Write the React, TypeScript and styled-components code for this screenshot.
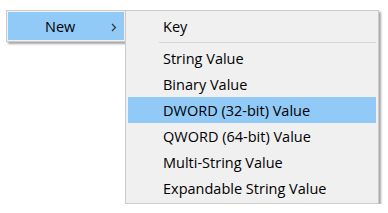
import React, { FC } from "react";
import styled, { createGlobalStyle } from "styled-components";

const GlobalStyle = createGlobalStyle`
  html, body {
    margin: 0;
    padding: 0;
    background: #fff;
  }
  body {
    font-family: "Open Sans", "Noto Sans", sans-serif;
    font-size: 14.5px;
    color: #000;
  }
`;

const Page = styled.div`
  display: flex;
  align-items: flex-start;
  padding: 10px 0 0 6px;
`;

const Menu = styled.div<{ $width: number }>`
  width: ${(p) => p.$width}px;
  box-sizing: border-box;
  background: #f0f0f0;
  border: 1px solid #cccccc;
  padding: 1px;
  box-shadow: 2px 2px 2px rgba(0, 0, 0, 0.35);
`;

const SubMenu = styled(Menu)`
  margin-left: -1px;
  padding: 2px;
  position: relative;
  z-index: 1;
`;

const Item = styled.div<{ $active?: boolean; $indent: number; $height: number }>`
  display: flex;
  align-items: center;
  box-sizing: border-box;
  height: ${(p) => p.$height}px;
  padding-left: ${(p) => p.$indent}px;
  padding-top: 2px;
  background: ${(p) => (p.$active ? "#91c9f7" : "transparent")};
  white-space: nowrap;
`;

const Label = styled.span`
  flex: 1;
  line-height: 1;
`;

const Arrow = styled.svg`
  width: 6px;
  height: 9px;
  margin-right: 7px;
`;

const Separator = styled.div`
  height: 6px;
  display: flex;
  align-items: center;
  margin-left: 31px;
  &::after {
    content: "";
    flex: 1;
    height: 1px;
    background: #d7d7d7;
  }
`;

const values = [
  "String Value",
  "Binary Value",
  "DWORD (32-bit) Value",
  "QWORD (64-bit) Value",
  "Multi-String Value",
  "Expandable String Value",
];

const App: FC = () => {
  return (
    <>
      <GlobalStyle />
      <Page>
        <Menu $width={120}>
          <Item $active $indent={37} $height={28}>
            <Label>New</Label>
            <Arrow viewBox="0 0 6 9">
              <path d="M1 1l3.5 3.5L1 8" fill="none" stroke="#333" strokeWidth="1.2" />
            </Arrow>
          </Item>
        </Menu>
        <SubMenu $width={254}>
          <Item $indent={35} $height={26}>
            <Label>Key</Label>
          </Item>
          <Separator />
          {values.map((v) => (
            <Item key={v} $indent={35} $height={26} $active={v.startsWith("DWORD")}>
              <Label>{v}</Label>
            </Item>
          ))}
        </SubMenu>
      </Page>
    </>
  );
};

export default App;
